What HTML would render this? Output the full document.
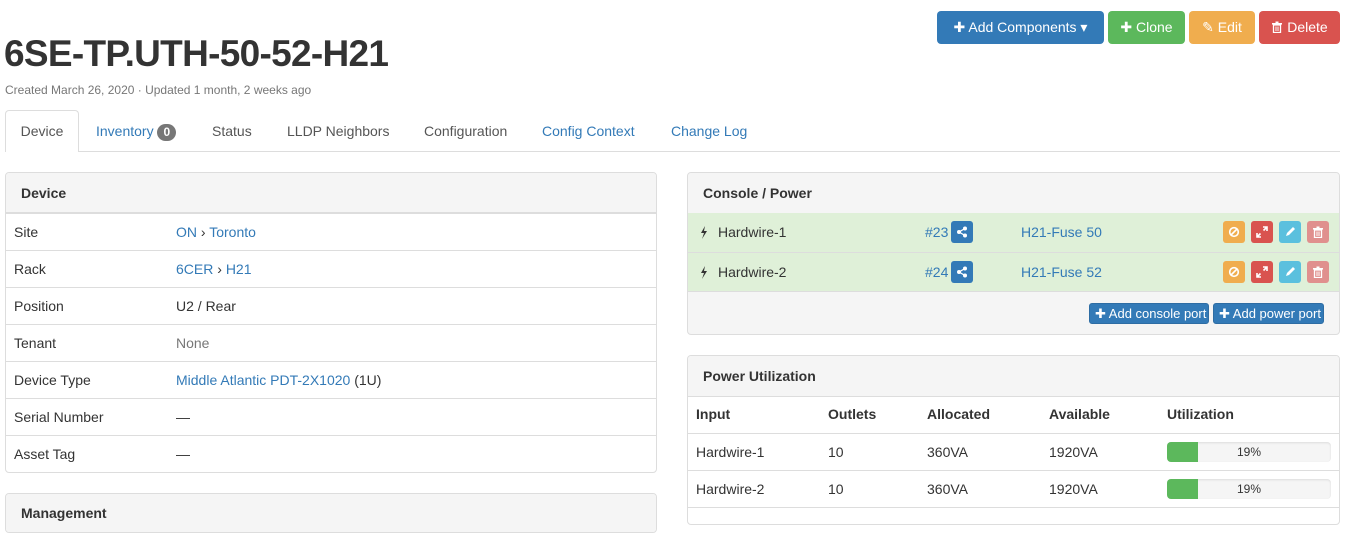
<!DOCTYPE html>
<html><head><meta charset="utf-8"><style>
*{box-sizing:border-box;margin:0;padding:0}
body{width:1345px;height:514px;overflow:hidden;background:#fff;font-family:"Liberation Sans",Arial,sans-serif;font-size:14px;color:#333;position:relative}
.a{position:absolute}
a,.lnk{color:#337ab7;text-decoration:none}
.btn{position:absolute;top:11px;height:33px;border-radius:4px;color:#fff;font-size:14px;line-height:33px;text-align:center;white-space:nowrap}
.panel{position:absolute;border:1px solid #ddd;border-radius:4px;background:#fff;overflow:hidden}
.ph{background:#f5f5f5;border-bottom:1px solid #ddd;font-weight:bold;padding-left:15px}
.row{position:absolute;left:0;right:0;border-top:1px solid #ddd;height:37px;line-height:36px}
.sb{display:inline-block;width:22px;height:22px;border-radius:3px;position:absolute;top:8px;color:#fff}
.sb svg{position:absolute;left:5px;top:5px}
.sm{position:absolute;top:130px;height:21px;background:#337ab7;border:1px solid #2e6da4;border-radius:3px;color:#fff;font-size:13px;line-height:19px;padding:0 5px;white-space:nowrap}
.bar{position:absolute;left:1167px;width:164px;height:20px;background:#f5f5f5;border-radius:4px;overflow:hidden;box-shadow:inset 0 1px 2px rgba(0,0,0,.1);font-size:12px;text-align:center;line-height:20px}
.bar i{position:absolute;left:0;top:0;bottom:0;width:31px;background:#5cb85c}
</style></head><body>
<svg width="0" height="0" style="position:absolute"><defs>
<g id="tr"><rect x="1" y="2" width="10" height="1.6" fill="#fff"/><rect x="4.5" y="0.5" width="3" height="1.5" fill="#fff"/><path d="M2.5 4h7v7.5h-7z" fill="none" stroke="#fff" stroke-width="1.3"/><path d="M5 5.5v4.5M7 5.5v4.5" stroke="#fff" stroke-width="1"/></g>
</defs></svg>
<div class="a" style="left:4px;top:30px;font-size:37px;font-weight:bold;letter-spacing:-0.7px;line-height:48px">6SE-TP.UTH-50-52-H21</div>
<div class="a" style="left:5px;top:83px;font-size:12px;color:#777">Created March 26, 2020 · Updated 1 month, 2 weeks ago</div>

<div class="btn" style="left:937px;width:167px;background:#337ab7">✚ Add Components ▾</div>
<div class="btn" style="left:1108px;width:77px;background:#5cb85c">✚ Clone</div>
<div class="btn" style="left:1189px;width:66px;background:#f0ad4e">✎ Edit</div>
<div class="btn" style="left:1259px;width:81px;background:#d9534f"><svg width="12" height="12" style="vertical-align:-1px"><use href="#tr"/></svg> Delete</div>

<div class="a" style="left:5px;right:5px;top:151px;border-top:1px solid #ddd"></div>
<div class="a" style="left:5px;top:110px;width:74px;height:42px;border:1px solid #ddd;border-bottom:none;border-radius:4px 4px 0 0;background:#fff;text-align:center;line-height:40px;color:#555">Device</div>
<div class="a" style="top:110px;line-height:42px;left:96px" ><span class="lnk">Inventory</span> <span style="display:inline-block;background:#777;color:#fff;border-radius:10px;font-size:12px;font-weight:bold;line-height:17px;padding:0 6px">0</span></div>
<div class="a" style="top:110px;line-height:42px;left:212px;color:#555">Status</div>
<div class="a" style="top:110px;line-height:42px;left:287px;color:#555">LLDP Neighbors</div>
<div class="a" style="top:110px;line-height:42px;left:424px;color:#555">Configuration</div>
<div class="a lnk" style="top:110px;line-height:42px;left:542px">Config Context</div>
<div class="a lnk" style="top:110px;line-height:42px;left:671px">Change Log</div>

<div class="panel" style="left:5px;top:172px;width:652px;height:301px">
<div class="ph" style="height:40px;line-height:40px">Device</div>
<div class="row" style="top:40px"><span class="a" style="left:8px">Site</span><span class="a" style="left:170px"><a>ON</a> › <a>Toronto</a></span></div>
<div class="row" style="top:77px"><span class="a" style="left:8px">Rack</span><span class="a" style="left:170px"><a>6CER</a> › <a>H21</a></span></div>
<div class="row" style="top:114px"><span class="a" style="left:8px">Position</span><span class="a" style="left:170px">U2 / Rear</span></div>
<div class="row" style="top:151px"><span class="a" style="left:8px">Tenant</span><span class="a" style="left:170px;color:#777">None</span></div>
<div class="row" style="top:188px"><span class="a" style="left:8px">Device Type</span><span class="a" style="left:170px"><a>Middle Atlantic PDT-2X1020</a> (1U)</span></div>
<div class="row" style="top:225px"><span class="a" style="left:8px">Serial Number</span><span class="a" style="left:170px">—</span></div>
<div class="row" style="top:262px"><span class="a" style="left:8px">Asset Tag</span><span class="a" style="left:170px">—</span></div>
</div>
<div class="panel" style="left:5px;top:493px;width:652px;height:40px"><div class="ph" style="height:40px;line-height:38px">Management</div></div>

<div class="panel" style="left:687px;top:172px;width:653px;height:163px;background:#f5f5f5">
<div class="ph" style="height:41px;line-height:40px">Console / Power</div>
<div class="row" style="top:40px;height:39px;background:#dff0d8;line-height:38px;border-top:none">
<svg class="a" style="left:12px;top:13px" width="8" height="13"><path d="M5 0L1 7h3l-2 6 5-8H4z" fill="#333"/></svg>
<span class="a" style="left:30px">Hardwire-1</span><a class="a" style="left:237px">#23</a>
<span class="sb" style="left:263px;background:#337ab7"><svg width="12" height="12"><circle cx="9" cy="2.5" r="2" fill="#fff"/><circle cx="3" cy="6" r="2" fill="#fff"/><circle cx="9" cy="9.5" r="2" fill="#fff"/><path d="M9 2.5L3 6l6 3.5" stroke="#fff" stroke-width="1.3" fill="none"/></svg></span>
<a class="a" style="left:333px">H21-Fuse 50</a>
<span class="sb" style="left:535px;background:#f0ad4e"><svg width="12" height="12"><circle cx="6" cy="6" r="4.3" stroke="#fff" stroke-width="1.6" fill="none"/><path d="M3 9L9 3" stroke="#fff" stroke-width="1.6"/></svg></span>
<span class="sb" style="left:563px;background:#d9534f"><svg width="12" height="12"><path d="M7 1h4v4M5 11H1V7M11 1L7.5 4.5M1 11l3.5-3.5" stroke="#fff" stroke-width="1.6" fill="none"/></svg></span>
<span class="sb" style="left:591px;background:#5bc0de"><svg width="12" height="12"><path d="M2 10l1-3 6-6 2 2-6 6z" fill="#fff"/></svg></span>
<span class="sb" style="left:619px;background:#e0908e"><svg width="12" height="12"><use href="#tr"/></svg></span></div>
<div class="row" style="top:79px;height:39px;background:#dff0d8;line-height:38px">
<svg class="a" style="left:12px;top:13px" width="8" height="13"><path d="M5 0L1 7h3l-2 6 5-8H4z" fill="#333"/></svg>
<span class="a" style="left:30px">Hardwire-2</span><a class="a" style="left:237px">#24</a>
<span class="sb" style="left:263px;background:#337ab7"><svg width="12" height="12"><circle cx="9" cy="2.5" r="2" fill="#fff"/><circle cx="3" cy="6" r="2" fill="#fff"/><circle cx="9" cy="9.5" r="2" fill="#fff"/><path d="M9 2.5L3 6l6 3.5" stroke="#fff" stroke-width="1.3" fill="none"/></svg></span>
<a class="a" style="left:333px">H21-Fuse 52</a>
<span class="sb" style="left:535px;background:#f0ad4e"><svg width="12" height="12"><circle cx="6" cy="6" r="4.3" stroke="#fff" stroke-width="1.6" fill="none"/><path d="M3 9L9 3" stroke="#fff" stroke-width="1.6"/></svg></span>
<span class="sb" style="left:563px;background:#d9534f"><svg width="12" height="12"><path d="M7 1h4v4M5 11H1V7M11 1L7.5 4.5M1 11l3.5-3.5" stroke="#fff" stroke-width="1.6" fill="none"/></svg></span>
<span class="sb" style="left:591px;background:#5bc0de"><svg width="12" height="12"><path d="M2 10l1-3 6-6 2 2-6 6z" fill="#fff"/></svg></span>
<span class="sb" style="left:619px;background:#e0908e"><svg width="12" height="12"><use href="#tr"/></svg></span></div>
<div class="a" style="left:0;right:0;top:118px;border-top:1px solid #ddd"></div>
<div class="sm" style="left:401px;width:120px">✚ Add console port</div>
<div class="sm" style="left:525px;width:111px">✚ Add power port</div>
</div>

<div class="panel" style="left:687px;top:355px;width:653px;height:170px">
<div class="ph" style="height:41px;line-height:41px">Power Utilization</div>
</div>
<div class="a" style="left:688px;right:6px;top:433px;border-top:1px solid #ddd"></div>
<div class="a" style="left:688px;right:6px;top:470px;border-top:1px solid #ddd"></div>
<div class="a" style="left:688px;right:6px;top:507px;border-top:1px solid #ddd"></div>
<div class="a" style="top:406px;left:696px;font-weight:bold">Input</div>
<div class="a" style="top:406px;left:828px;font-weight:bold">Outlets</div>
<div class="a" style="top:406px;left:927px;font-weight:bold">Allocated</div>
<div class="a" style="top:406px;left:1049px;font-weight:bold">Available</div>
<div class="a" style="top:406px;left:1167px;font-weight:bold">Utilization</div>
<div class="a" style="top:444px;left:696px">Hardwire-1</div><div class="a" style="top:444px;left:828px">10</div><div class="a" style="top:444px;left:927px">360VA</div><div class="a" style="top:444px;left:1049px">1920VA</div>
<div class="bar" style="top:442px"><i></i>19%</div>
<div class="a" style="top:481px;left:696px">Hardwire-2</div><div class="a" style="top:481px;left:828px">10</div><div class="a" style="top:481px;left:927px">360VA</div><div class="a" style="top:481px;left:1049px">1920VA</div>
<div class="bar" style="top:479px"><i></i>19%</div>
</body></html>
